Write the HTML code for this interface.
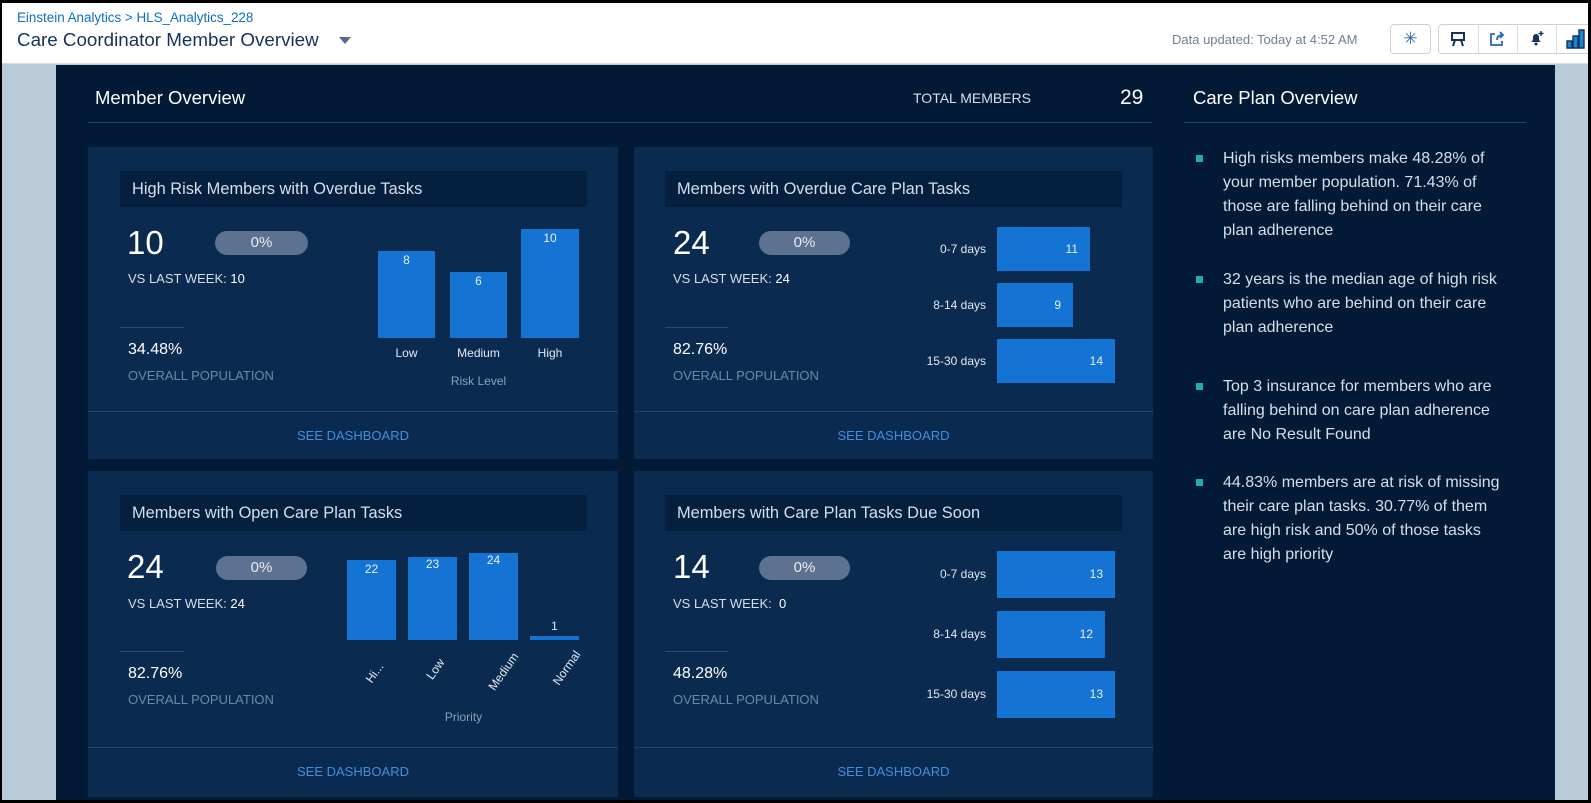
<!DOCTYPE html>
<html><head><meta charset="utf-8"><style>
*{margin:0;padding:0;box-sizing:border-box}
body{width:1591px;height:803px;background:#000;font-family:"Liberation Sans",sans-serif;position:relative;overflow:hidden}
.a{position:absolute}
#frame{left:2px;top:3px;width:1586px;height:797px;background:#b9cad9;overflow:hidden}
#hdr{left:0;top:0;width:1586px;height:61px;background:#fff;border-bottom:1px solid #d8dde6}
#panel{left:54px;top:62px;width:1499px;height:735px;background:#031a36}
.card{background:#0b2a50}
.tb{background:#05203f;color:#d5dfea;font-size:16.4px;line-height:36px;padding-left:12px}
.big{color:#fff;font-size:33px}
.pill{background:#5d7190;border-radius:12px;color:#e6ecf3;font-size:15px;text-align:center;line-height:24px}
.lbl{color:#d5dfea;font-size:13px}
.ov{color:#6f87a6;font-size:13px}
.pct{color:#fff;font-size:16px}
.sl{height:1px;background:#2f4c70}
.div{height:1px;background:#254770}
.sd{color:#3f8fe0;font-size:13px;text-align:center}
.bar{background:#1473d3;color:#e8f0fa;font-size:12px;text-align:center}
.hb{background:#1473d3;color:#e8f0fa;font-size:12px;text-align:right;padding-right:12px}
.cat{color:#e2e9f1;font-size:12px}
.ax{color:#8aa0bb;font-size:12px}
.bul{color:#d5dfea;font-size:16px;line-height:24px}
.sq{width:7px;height:7px;background:#1eb0a4}
.btn{border:1px solid #c9d1db;background:#fff;height:30px;top:21px}
</style></head><body>
<div id="frame" class="a">
 <div id="hdr" class="a">
  <div class="a" style="left:15px;top:7px;font-size:13.4px;color:#0b6fc9">Einstein Analytics &gt; HLS_Analytics_228</div>
  <div class="a" style="left:15px;top:26px;font-size:18.8px;color:#16325c">Care Coordinator Member Overview</div>
  <div class="a" style="left:337px;top:34px;width:0;height:0;border-left:6px solid transparent;border-right:6px solid transparent;border-top:7px solid #54698d"></div>
  <div class="a" style="left:1170px;top:29px;font-size:13px;color:#6e7f95">Data updated: Today at 4:52 AM</div>
  <div class="a btn" style="left:1388px;width:41px;border-radius:4px;text-align:center;line-height:28px;color:#2a67b8;font-size:17px">✳</div>
  <div class="a btn" style="left:1436px;width:160px;border-radius:4px 0 0 4px"></div>
  <div class="a" style="left:1476px;top:21px;width:1px;height:30px;background:#d8dde6"></div>
  <div class="a" style="left:1515px;top:21px;width:1px;height:30px;background:#d8dde6"></div>
  <div class="a" style="left:1554px;top:21px;width:1px;height:30px;background:#d8dde6"></div>
  <svg class="a" style="left:1448px;top:28px" width="16" height="16" viewBox="0 0 16 16"><path d="M2 2h12v7H2zM5 9l-2 6M11 9l2 6" fill="none" stroke="#16325c" stroke-width="2"/></svg>
  <svg class="a" style="left:1487px;top:28px" width="16" height="16" viewBox="0 0 16 16"><path d="M6 3H2v11h11v-4M8 9c0-4 3-5 6-5M11 1l3 3-3 3" fill="none" stroke="#2a67b8" stroke-width="1.8"/></svg>
  <svg class="a" style="left:1526px;top:27px" width="16" height="16" viewBox="0 0 16 16"><path d="M3 12c2-1 2-3 2-5a3 3 0 016 0c0 2 0 4 2 5z" fill="#16325c"/><circle cx="8" cy="14" r="1.5" fill="#16325c"/><path d="M13 1v5M10.5 3.5h5" stroke="#16325c" stroke-width="1.4"/></svg>
  <svg class="a" style="left:1563px;top:26px" width="20" height="20" viewBox="0 0 20 20"><path d="M2 12h5v7H2zM8 7h5v12H8zM14 1h5v18h-5z" fill="#1b83d0" stroke="#16325c" stroke-width="1.4"/></svg>
 </div>
 <div id="panel" class="a"></div>
</div>
<div class="a" style="left:95px;top:87px;font-size:18.5px;color:#fff">Member Overview</div>
<div class="a" style="left:913px;top:90px;font-size:14px;color:#d5dfea">TOTAL MEMBERS</div>
<div class="a" style="left:1120px;top:86px;font-size:21px;color:#fff">29</div>
<div class="a" style="left:88px;top:122px;width:1064px;height:1px;background:#24456b"></div>
<div class="a" style="left:1193px;top:87px;font-size:18.5px;color:#fff">Care Plan Overview</div>
<div class="a" style="left:1184px;top:122px;width:342px;height:1px;background:#24456b"></div>

<div class="a card" style="left:88px;top:147px;width:530px;height:312px"></div>
<div class="a tb" style="left:120px;top:171px;width:467px">High Risk Members with Overdue Tasks</div>
<div class="a big" style="left:127px;top:224px">10</div>
<div class="a pill" style="left:215px;top:231px;width:93px">0%</div>
<div class="a lbl" style="left:128px;top:271px">VS LAST WEEK: <span style="color:#fff">10</span></div>
<div class="a sl" style="left:120px;top:327px;width:64px"></div>
<div class="a pct" style="left:128px;top:341px">34.48%</div>
<div class="a ov" style="left:128px;top:368px">OVERALL POPULATION</div>
<div class="a bar" style="left:378px;top:251px;width:57px;height:87px;padding-top:2px">8</div>
<div class="a bar" style="left:450px;top:272px;width:57px;height:66px;padding-top:2px">6</div>
<div class="a bar" style="left:521px;top:229px;width:58px;height:109px;padding-top:2px">10</div>
<div class="a cat" style="left:378px;top:346px;width:57px;text-align:center">Low</div>
<div class="a cat" style="left:440px;top:346px;width:77px;text-align:center">Medium</div>
<div class="a cat" style="left:521px;top:346px;width:58px;text-align:center">High</div>
<div class="a ax" style="left:440px;top:374px;width:77px;text-align:center">Risk Level</div>
<div class="a div" style="left:88px;top:411px;width:530px"></div>
<div class="a sd" style="left:88px;top:428px;width:530px">SEE DASHBOARD</div>

<div class="a card" style="left:634px;top:147px;width:519px;height:312px"></div>
<div class="a tb" style="left:665px;top:171px;width:457px">Members with Overdue Care Plan Tasks</div>
<div class="a big" style="left:673px;top:224px">24</div>
<div class="a pill" style="left:759px;top:231px;width:91px">0%</div>
<div class="a lbl" style="left:673px;top:271px">VS LAST WEEK: <span style="color:#fff">24</span></div>
<div class="a sl" style="left:665px;top:327px;width:63px"></div>
<div class="a pct" style="left:673px;top:341px">82.76%</div>
<div class="a ov" style="left:673px;top:368px">OVERALL POPULATION</div>
<div class="a cat" style="left:886px;top:242px;width:100px;text-align:right">0-7 days</div>
<div class="a cat" style="left:886px;top:298px;width:100px;text-align:right">8-14 days</div>
<div class="a cat" style="left:886px;top:354px;width:100px;text-align:right">15-30 days</div>
<div class="a hb" style="left:997px;top:227px;width:93px;height:44px;line-height:44px">11</div>
<div class="a hb" style="left:997px;top:283px;width:76px;height:44px;line-height:44px">9</div>
<div class="a hb" style="left:997px;top:339px;width:118px;height:44px;line-height:44px">14</div>
<div class="a div" style="left:634px;top:411px;width:519px"></div>
<div class="a sd" style="left:634px;top:428px;width:519px">SEE DASHBOARD</div>

<div class="a card" style="left:88px;top:471px;width:530px;height:326px"></div>
<div class="a tb" style="left:120px;top:495px;width:467px">Members with Open Care Plan Tasks</div>
<div class="a big" style="left:127px;top:548px">24</div>
<div class="a pill" style="left:216px;top:556px;width:91px">0%</div>
<div class="a lbl" style="left:128px;top:596px">VS LAST WEEK: <span style="color:#fff">24</span></div>
<div class="a sl" style="left:120px;top:651px;width:64px"></div>
<div class="a pct" style="left:128px;top:665px">82.76%</div>
<div class="a ov" style="left:128px;top:692px">OVERALL POPULATION</div>
<div class="a bar" style="left:347px;top:560px;width:49px;height:80px;padding-top:2px">22</div>
<div class="a bar" style="left:408px;top:557px;width:49px;height:83px">23</div>
<div class="a bar" style="left:469px;top:553px;width:49px;height:87px">24</div>
<div class="a bar" style="left:530px;top:636px;width:49px;height:4px"></div>
<div class="a cat" style="left:530px;top:619px;width:49px;text-align:center">1</div>
<div class="a cat" style="left:355px;top:660px;transform:rotate(-55deg);transform-origin:right top;width:40px;text-align:right;margin-left:-20px">Hi...</div>
<div class="a cat" style="left:416px;top:656px;transform:rotate(-55deg);transform-origin:right top;width:40px;text-align:right;margin-left:-20px">Low</div>
<div class="a cat" style="left:480px;top:650px;transform:rotate(-55deg);transform-origin:right top;width:60px;text-align:right;margin-left:-30px">Medium</div>
<div class="a cat" style="left:542px;top:648px;transform:rotate(-55deg);transform-origin:right top;width:60px;text-align:right;margin-left:-30px">Normal</div>
<div class="a ax" style="left:425px;top:710px;width:77px;text-align:center">Priority</div>
<div class="a div" style="left:88px;top:747px;width:530px"></div>
<div class="a sd" style="left:88px;top:764px;width:530px">SEE DASHBOARD</div>

<div class="a card" style="left:634px;top:471px;width:519px;height:326px"></div>
<div class="a tb" style="left:665px;top:495px;width:457px">Members with Care Plan Tasks Due Soon</div>
<div class="a big" style="left:673px;top:548px">14</div>
<div class="a pill" style="left:759px;top:556px;width:91px">0%</div>
<div class="a lbl" style="left:673px;top:596px">VS LAST WEEK: &nbsp;<span style="color:#fff">0</span></div>
<div class="a sl" style="left:665px;top:651px;width:63px"></div>
<div class="a pct" style="left:673px;top:665px">48.28%</div>
<div class="a ov" style="left:673px;top:692px">OVERALL POPULATION</div>
<div class="a cat" style="left:886px;top:567px;width:100px;text-align:right">0-7 days</div>
<div class="a cat" style="left:886px;top:627px;width:100px;text-align:right">8-14 days</div>
<div class="a cat" style="left:886px;top:687px;width:100px;text-align:right">15-30 days</div>
<div class="a hb" style="left:997px;top:551px;width:118px;height:47px;line-height:47px">13</div>
<div class="a hb" style="left:997px;top:611px;width:108px;height:47px;line-height:47px">12</div>
<div class="a hb" style="left:997px;top:671px;width:118px;height:47px;line-height:47px">13</div>
<div class="a div" style="left:634px;top:747px;width:519px"></div>
<div class="a sd" style="left:634px;top:764px;width:519px">SEE DASHBOARD</div>

<div class="a sq" style="left:1196px;top:155px"></div>
<div class="a bul" style="left:1223px;top:147px;width:282px">High risks members make 48.28% of your member population. 71.43% of those are falling behind on their care plan adherence</div>
<div class="a sq" style="left:1196px;top:276px"></div>
<div class="a bul" style="left:1223px;top:268px;width:282px">32 years is the median age of high risk patients who are behind on their care plan adherence</div>
<div class="a sq" style="left:1196px;top:383px"></div>
<div class="a bul" style="left:1223px;top:375px;width:292px">Top 3 insurance for members who are falling behind on care plan adherence are No Result Found</div>
<div class="a sq" style="left:1196px;top:479px"></div>
<div class="a bul" style="left:1223px;top:471px;width:282px">44.83% members are at risk of missing their care plan tasks. 30.77% of them are high risk and 50% of those tasks are high priority</div>
</body></html>
